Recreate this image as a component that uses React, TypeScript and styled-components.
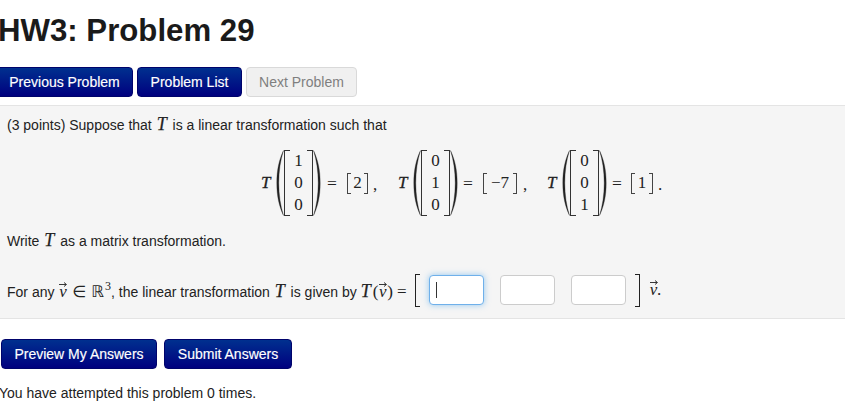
import React from "react";
import styled, { createGlobalStyle } from "styled-components";

const Global = createGlobalStyle`
  html, body { margin: 0; padding: 0; background: #fff; overflow: hidden; }
  body { font-family: "Liberation Sans", Arial, sans-serif; color: #222; }
`;
const Page = styled.div`
  width: 845px; height: 404px; overflow: hidden; display: flex; flex-direction: column;
`;
const Title = styled.h1`
  margin: 13px 0 0 -2px; font-size: 31.2px; line-height: 35px; font-weight: 700; color: #1a1a1a; white-space: nowrap;
`;
const NavBar = styled.nav`
  display: flex; gap: 4px; margin: 19px 0 0 -4px;
`;
const Btn = styled.button<{ $w: number }>`
  width: ${p => p.$w}px; height: 30px; padding: 0; border-radius: 4px;
  border: 1px solid #00036b;
  background: linear-gradient(#00308f, #00007f);
  color: #fff; font: 14px/20px "Liberation Sans", Arial, sans-serif;
  -webkit-text-stroke: 0.15px #fff;
`;
const DisabledBtn = styled(Btn)`
  border-color: #d9d9d9; background: #f0f0f0; color: #7f7f7f; -webkit-text-stroke: 0;
`;
const Panel = styled.section`
  margin-top: 8px; height: 212px; background: #f5f5f5;
  border-top: 1px solid #e4e4e4; border-bottom: 1px solid #e4e4e4;
  padding: 0 0 0 7px; font-size: 14px; color: #222;
  display: flex; flex-direction: column;
`;
const Line = styled.div<{ $mt: number }>`
  margin-top: ${p => p.$mt}px; height: 20px; line-height: 20px; white-space: nowrap;
`;
const MathI = styled.i<{ $ml?: number }>`
  font: italic 18px/0 "Liberation Serif", serif; -webkit-text-stroke: 0.25px #222; color: #222;
  margin: 0 2px 0 ${p => p.$ml ?? 1}px;
`;
const Display = styled.div`
  margin-top: 15px; margin-left: 254px; height: 66px; display: flex; align-items: center;
  font: 17px/20px "Liberation Serif", serif; color: #222;
`;
const DispT = styled.i<{ $ml?: number }>`
  font-size: 17px; font-style: italic; margin-left: ${p => p.$ml ?? 0}px; width: 15px; flex: none;
  -webkit-text-stroke: 0.3px #222;
`;
const ParenSvg = styled.svg`
  width: 8px; height: 66px; flex: none; display: block;
`;
const Matrix = styled.div`
  width: 29px; height: 66px; box-sizing: border-box; flex: none; display: grid; grid-template-rows: repeat(3, 1fr); justify-items: center; align-items: center;
  border-left: 1.5px solid #333; border-right: 1.5px solid #333; position: relative;
  &::before, &::after { content: ""; position: absolute; left: 0; right: 0; height: 1px; background: linear-gradient(90deg, #333 5px, transparent 5px, transparent calc(100% - 5px), #333 calc(100% - 5px)); }
  &::before { top: 0; } &::after { bottom: 0; }
`;
const Eq = styled.span<{ $ml: number }>`
  margin-left: ${p => p.$ml}px; width: 10px; flex: none; font-size: 17.5px; text-align: center;
`;
const InlineBracket = styled.span<{ $w: number; $ml: number }>`
  margin-left: ${p => p.$ml}px; width: ${p => p.$w}px; height: 21px; box-sizing: border-box; flex: none; display: flex; justify-content: center; align-items: center;
  border-left: 1px solid #444; border-right: 1px solid #444; position: relative;
  &::before, &::after { content: ""; position: absolute; left: 0; right: 0; height: 1px; background: linear-gradient(90deg, #444 3px, transparent 3px, transparent calc(100% - 3px), #444 calc(100% - 3px)); }
  &::before { top: 0; } &::after { bottom: 0; }
`;
const Punct = styled.span<{ $ml: number }>`
  margin-left: ${p => p.$ml}px; width: 4px; flex: none; padding-top: 3px;
`;
const AnswerLine = styled.div`
  margin-top: 22px; height: 34px; display: flex; align-items: center; line-height: 20px;
`;
const AnswerText = styled.span`
  display: block; width: 401px; flex: none; white-space: nowrap; padding-top: 3px;
`;
const Vec = styled.span<{ $ml?: number }>`
  position: relative; display: inline-block; font: italic 17px/20px "Liberation Serif", serif; width: 9px; text-align: center; color: #222;
  margin-left: ${p => p.$ml ?? 0}px;
`;
const VecArrow = styled.svg`
  position: absolute; left: 0; top: -1px; width: 10px; height: 7px;
`;
const Symbol = styled.span<{ $ml?: number }>`
  font: 16px/20px "DejaVu Sans", sans-serif; margin-left: ${p => p.$ml ?? 0}px;
`;
const Sup = styled.sup`
  font: 12px/11px "Liberation Serif", serif; position: relative; top: -1px; vertical-align: top; margin-left: 1px;
`;
const SerifTxt = styled.span<{ $ml?: number }>`
  font: 17px/20px "Liberation Serif", serif; margin-left: ${p => p.$ml ?? 0}px;
`;
const TallBracket = styled.span<{ $side: "l" | "r"; $ml: number }>`
  width: 5px; height: 33px; flex: none; margin-left: ${p => p.$ml}px; box-sizing: border-box;
  border: 1.5px solid #222; ${p => (p.$side === "l" ? "border-right: 0;" : "border-left: 0;")}
`;
const Answer = styled.input<{ $ml: number; $focus?: boolean }>`
  display: block; flex: none; width: 55px; height: 30px; box-sizing: border-box; margin: 0 0 0 ${p => p.$ml}px; background: #fff; outline: 0; padding: 0;
  border-radius: 4px; border: 1px solid ${p => (p.$focus ? "#6fb0ea" : "#ccc")};
  ${p => (p.$focus ? "box-shadow: 0 0 6px rgba(82,168,236,.6);" : "")}
`;
const FocusWrap = styled.span`
  position: relative; display: block; flex: none;
`;
const Caret = styled.span`
  position: absolute; left: 16px; top: 7px; width: 1px; height: 16px; background: #333;
`;
const SubmitBar = styled.div`
  display: flex; gap: 7px; margin: 20px 0 0 1px;
`;
const Attempts = styled.p`
  margin: 14px 0 0 -1px; font-size: 14px; line-height: 20px; color: #222; white-space: nowrap;
`;

const Paren = ({ left }: { left?: boolean }) => (
  <ParenSvg viewBox="0 0 8 66" aria-hidden>
    <path
      d={left
        ? "M7.500.5C3 10 .8 20 .8 33s2.200 23 6.700 32.500C4.500 56 2.800 45 2.800 33S4.500 10 7.500.5Z"
        : "M.5.5C5 10 7.200 20 7.200 33S5 56 .5 65.500C3.500 56 5.200 45 5.200 33S3.500 10 .5.5Z"}
      fill="#222"
      stroke="#222"
      strokeWidth=".3"
    />
  </ParenSvg>
);

const V = ({ ml }: { ml?: number }) => (
  <Vec $ml={ml}>
    v
    <VecArrow viewBox="0 0 10 7" aria-hidden>
      <path d="M1 3.500h7M6 1.500l2.500 2-2.500 2" fill="none" stroke="#222" strokeWidth=".9" />
    </VecArrow>
  </Vec>
);

const Col = ({ a, b, c }: { a: string; b: string; c: string }) => (
  <>
    <Paren left />
    <Matrix>
      <span>{a}</span>
      <span>{b}</span>
      <span>{c}</span>
    </Matrix>
    <Paren />
  </>
);

export default function App() {
  return (
    <Page>
      <Global />
      <Title>HW3: Problem 29</Title>
      <NavBar>
        <Btn $w={137}>Previous Problem</Btn>
        <Btn $w={105}>Problem List</Btn>
        <DisabledBtn $w={111} disabled>Next Problem</DisabledBtn>
      </NavBar>
      <Panel>
        <Line $mt={9}>(3 points) Suppose that <MathI>T</MathI> is a linear transformation such that</Line>
        <Display>
          <DispT>T</DispT>
          <Col a="1" b="0" c="0" />
          <Eq $ml={6}>=</Eq>
          <InlineBracket $w={21} $ml={10}>2</InlineBracket>
          <Punct $ml={5}>,</Punct>
          <DispT $ml={21}>T</DispT>
          <Col a="0" b="1" c="0" />
          <Eq $ml={5}>=</Eq>
          <InlineBracket $w={34} $ml={10}>−7</InlineBracket>
          <Punct $ml={6}>,</Punct>
          <DispT $ml={20}>T</DispT>
          <Col a="0" b="0" c="1" />
          <Eq $ml={5}>=</Eq>
          <InlineBracket $w={22} $ml={9}>1</InlineBracket>
          <Punct $ml={5}>.</Punct>
        </Display>
        <Line $mt={15}>Write <MathI>T</MathI> as a matrix transformation.</Line>
        <AnswerLine>
          <AnswerText>
            For any<V ml={4} /><Symbol $ml={5}>∈</Symbol><Symbol $ml={5}>ℝ</Symbol><Sup>3</Sup>, the linear transformation <MathI>T</MathI> is given by <MathI $ml={0}>T</MathI><SerifTxt>(</SerifTxt><V /><SerifTxt>)</SerifTxt><SerifTxt $ml={4}>=</SerifTxt>
          </AnswerText>
          <TallBracket $side="l" $ml={7} />
          <FocusWrap>
            <Answer $ml={9} $focus />
            <Caret />
          </FocusWrap>
          <Answer $ml={16} />
          <Answer $ml={16} />
          <TallBracket $side="r" $ml={9} />
          <V ml={9} />
          <SerifTxt $ml={-1}>.</SerifTxt>
        </AnswerLine>
      </Panel>
      <SubmitBar>
        <Btn $w={156}>Preview My Answers</Btn>
        <Btn $w={128}>Submit Answers</Btn>
      </SubmitBar>
      <Attempts>You have attempted this problem 0 times.</Attempts>
    </Page>
  );
}
